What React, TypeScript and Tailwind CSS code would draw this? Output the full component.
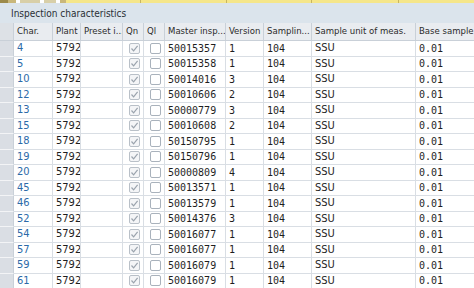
import React from 'react'

type Row = { char: string; master: string; version: string }

const rows: Row[] = [
  { char: '4', master: '50015357', version: '1' },
  { char: '5', master: '50015358', version: '1' },
  { char: '10', master: '50014016', version: '3' },
  { char: '12', master: '50010606', version: '2' },
  { char: '13', master: '50000779', version: '3' },
  { char: '15', master: '50010608', version: '2' },
  { char: '18', master: '50150795', version: '1' },
  { char: '19', master: '50150796', version: '1' },
  { char: '20', master: '50000809', version: '4' },
  { char: '45', master: '50013571', version: '1' },
  { char: '46', master: '50013579', version: '1' },
  { char: '52', master: '50014376', version: '3' },
  { char: '54', master: '50016077', version: '1' },
  { char: '57', master: '50016077', version: '1' },
  { char: '59', master: '50016079', version: '1' },
  { char: '61', master: '50016079', version: '1' },
]

const cols = 'grid grid-cols-[14px_39px_28px_42px_21px_21px_61px_38px_48px_104px_90px]'
const mono = { fontFamily: '"DejaVu Sans Mono", monospace' }

const CheckBox = ({ checked }: { checked?: boolean }) => (
  <span
    className={`flex h-[11px] w-[11px] items-center justify-center rounded-[2px] border ${
      checked ? 'border-[#b9c0c8] bg-[#f4f5f7]' : 'border-[#a9b2bc] bg-white'
    }`}
  >
    {checked && (
      <svg width="9" height="9" viewBox="0 0 9 9">
        <path d="M1.5 4.5 L3.6 6.8 L7.6 1.8" fill="none" stroke="#9aa3ad" strokeWidth="1.2" />
      </svg>
    )}
  </span>
)

const HeaderCell = ({ children }: { children?: React.ReactNode }) => (
  <div className="flex items-center overflow-hidden whitespace-nowrap border-r border-[#c9d0d8] pl-[3px] text-[9.5px] text-[#2b2b2b]">
    {children}
  </div>
)

const Cell = ({ children, className = '' }: { children?: React.ReactNode; className?: string }) => (
  <div
    className={`flex items-center overflow-hidden whitespace-nowrap border-r border-b border-[#d9dee4] pl-[3px] ${className}`}
  >
    {children}
  </div>
)

export default function App() {
  return (
    <div
      className="h-[288px] w-[474px] overflow-hidden bg-white"
      style={{ fontFamily: '"DejaVu Sans Condensed", "Liberation Sans", sans-serif' }}
    >
      {/* toolbar strip */}
      <div className="flex h-[3px] bg-[#f5e68a]">
        <div className="flex w-[140px]">
          <span className="w-[8px] bg-[#9c8a4a]" />
          <span className="w-[8px] bg-[#c9b77a]" />
          <span className="w-[4px] bg-white" />
          <span className="w-[20px] bg-[#d8cfa8]" />
          <span className="w-[4px] bg-white" />
          <span className="w-[12px] bg-[#d8cfa8]" />
          <span className="w-[4px] bg-white" />
          <span className="w-[6px] bg-[#c9b77a]" />
          <span className="flex-1 bg-[#f5e68a]" />
        </div>
        <span className="w-[86px] border-l border-[#c8b560]" />
        <span className="w-[85px] border-l border-[#c8b560]" />
        <span className="w-[87px] border-l border-[#c8b560]" />
        <span className="flex-1 border-l border-[#c8b560]" />
      </div>

      {/* title */}
      <div className="flex h-[20px] items-center bg-[#dbe4ec] pl-[11px] text-[10px] text-[#2a2f36]">
        Inspection characteristics
      </div>

      {/* header */}
      <div className={`${cols} h-[18px] border-b border-[#c9d0d8] bg-[#e9ecf0]`}>
        <div className="border-r border-[#c9d0d8] bg-[#dde1e6]" />
        <HeaderCell>Char.</HeaderCell>
        <HeaderCell>Plant</HeaderCell>
        <HeaderCell>Preset i...</HeaderCell>
        <HeaderCell>Qn</HeaderCell>
        <HeaderCell>Ql</HeaderCell>
        <HeaderCell>Master insp...</HeaderCell>
        <HeaderCell>Version</HeaderCell>
        <HeaderCell>Samplin...</HeaderCell>
        <HeaderCell>Sample unit of meas.</HeaderCell>
        <HeaderCell>Base sample</HeaderCell>
      </div>

      {rows.map((r, i) => (
        <div key={i} className={`${cols} h-[15.5px] text-[11px] text-[#1e1e1e]`}>
          <div className="border-b border-r border-b-[#f3f4f6] border-r-[#c9d0d8] bg-[#dadee4]" />
          <Cell className="text-[#2c6aa8]">{r.char}</Cell>
          <Cell>5792</Cell>
          <Cell />
          <Cell className="justify-center pl-0">
            <CheckBox checked />
          </Cell>
          <Cell className="justify-center pl-0">
            <CheckBox />
          </Cell>
          <Cell>
            <span style={mono} className="text-[10px]">
              {r.master}
            </span>
          </Cell>
          <Cell>
            <span style={mono} className="text-[10px]">
              {r.version}
            </span>
          </Cell>
          <Cell>
            <span style={mono} className="text-[10px]">
              104
            </span>
          </Cell>
          <Cell>SSU</Cell>
          <Cell>
            <span style={mono} className="text-[10px]">
              0.01
            </span>
          </Cell>
        </div>
      ))}
    </div>
  )
}
